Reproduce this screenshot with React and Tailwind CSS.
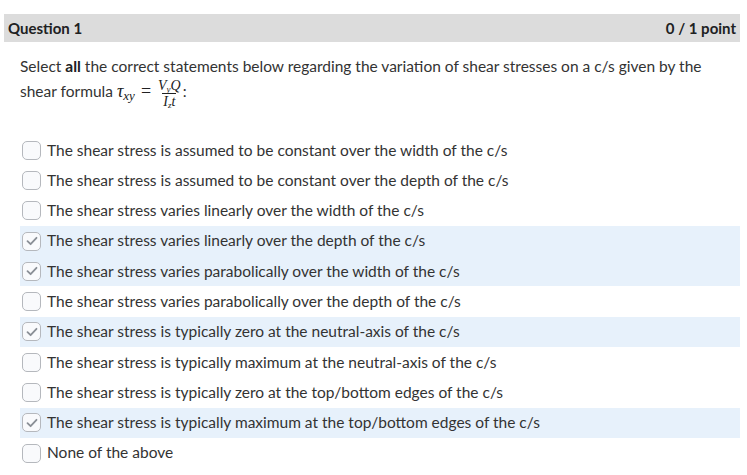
import React from 'react';

const options = [
  { text: 'The shear stress is assumed to be constant over the width of the c/s', checked: false },
  { text: 'The shear stress is assumed to be constant over the depth of the c/s', checked: false },
  { text: 'The shear stress varies linearly over the width of the c/s', checked: false },
  { text: 'The shear stress varies linearly over the depth of the c/s', checked: true },
  { text: 'The shear stress varies parabolically over the width of the c/s', checked: true },
  { text: 'The shear stress varies parabolically over the depth of the c/s', checked: false },
  { text: 'The shear stress is typically zero at the neutral-axis of the c/s', checked: true },
  { text: 'The shear stress is typically maximum at the neutral-axis of the c/s', checked: false },
  { text: 'The shear stress is typically zero at the top/bottom edges of the c/s', checked: false },
  { text: 'The shear stress is typically maximum at the top/bottom edges of the c/s', checked: true },
  { text: 'None of the above', checked: false },
];

const Checkbox = ({ checked }) => (
  <span className="w-[19px] h-[19px] rounded-[5px] border border-[#b5b8bd] bg-[#f9fafc] flex items-center justify-center shrink-0">
    {checked && (
      <svg width="12" height="10" viewBox="0 0 12 10" fill="none">
        <path d="M1.5 5.2 L4.6 8.2 L10.5 1.8" stroke="#8a8f96" strokeWidth="1.8" strokeLinecap="round" strokeLinejoin="round" />
      </svg>
    )}
  </span>
);

const App = () => {
  return (
    <div className="w-[747px] h-[475px] bg-white overflow-hidden" style={{ fontFamily: 'Lato, "Noto Sans", sans-serif' }}>
      <div className="pt-[14px] pl-[4px] pr-[7px]">
        {/* Header */}
        <div className="h-[28px] bg-[#dcdcdc] flex items-center justify-between pl-[4px] pr-[4px] text-[#202122] text-[15px] font-bold">
          <span>Question 1</span>
          <span>0 / 1 point</span>
        </div>

        {/* Prompt */}
        <div className="pl-[16px] pr-[16px] pt-[12px] text-[15.5px] text-[#333] leading-[25px]">
          <p>
            Select <b className="text-[#202122]">all</b> the correct statements below regarding the variation of shear stresses on a c/s given by the
          </p>
          <p className="flex items-center h-[25px]">
            <span>shear formula&nbsp;</span>
            <span className="flex items-center text-[#202122]" style={{ fontFamily: '"Liberation Serif", serif' }}>
              <span className="italic text-[18px]">τ</span>
              <span className="italic text-[13px] mt-[7px]">xy</span>
              <span className="text-[18px] mx-[6px]">=</span>
              <span className="inline-flex flex-col items-center italic text-[14px] leading-[13px] mt-[3px]">
                <span className="px-[1px] pb-[1px]">V<sub className="text-[9px]">y</sub>Q</span>
                <span className="border-t border-[#202122] px-[1px] pt-[1px]">I<sub className="text-[9px]">z</sub>t</span>
              </span>
            </span>
            <span className="ml-[1px]">:</span>
          </p>
        </div>

        {/* Options */}
        <div className="pl-[16px] pt-[31px] flex flex-col">
          {options.map((o, i) => (
            <div
              key={i}
              className={`h-[30.3px] flex items-center gap-[6px] pl-[2px] text-[15.5px] text-[#333] ${o.checked ? 'bg-[#e7f1fb]' : ''}`}
            >
              <Checkbox checked={o.checked} />
              <span>{o.text}</span>
            </div>
          ))}
        </div>
      </div>
    </div>
  );
};

export default App;
